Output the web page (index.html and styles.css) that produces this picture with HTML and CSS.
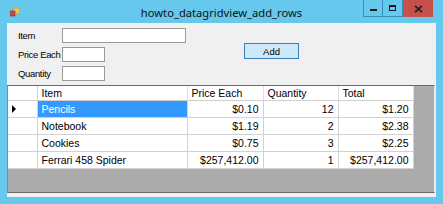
FILE: index.html
```html
<!DOCTYPE html>
<html lang="en">
<head>
  <meta charset="UTF-8">
  <title>howto_datagridview_add_rows</title>
  <link rel="stylesheet" href="styles.css">
</head>
<body>
  <div class="window">
    <div class="titlebar">
      <svg class="app-icon" width="10" height="9" viewBox="0 0 10 9">
        <rect x="3" y="0" width="7" height="6" fill="#f3c44a" stroke="#b88a1c" stroke-width="0.6"/>
        <rect x="0" y="3" width="5" height="5" fill="#d9443a" stroke="#8a2a2a" stroke-width="0.6"/>
        <rect x="1" y="4" width="3" height="1.2" fill="#3d6fd0"/>
      </svg>
      <div class="title">howto_datagridview_add_rows</div>
      <div class="caption-btns">
        <div class="cap-btn min"><span class="min-glyph"></span></div>
        <div class="cap-btn max"><span class="max-glyph"></span></div>
        <div class="cap-btn close">
          <svg width="9" height="8" viewBox="0 0 9 8"><path d="M1 0.8 L8 7.2 M8 0.8 L1 7.2" stroke="#222" stroke-width="1.8"/></svg>
        </div>
      </div>
    </div>
    <div class="client">
      <div class="form-area">
        <div class="fields">
          <label>Item</label><div class="textbox wide"></div>
          <label>Price Each</label><div class="textbox"></div>
          <label>Quantity</label><div class="textbox"></div>
        </div>
        <button class="add-btn">Add</button>
      </div>
      <div class="grid">
        <table>
          <thead>
            <tr>
              <th class="rh"></th>
              <th class="c-item">Item</th>
              <th class="c-price">Price Each</th>
              <th class="c-qty">Quantity</th>
              <th class="c-total">Total</th>
            </tr>
          </thead>
          <tbody>
            <tr>
              <td class="rh"><span class="arrow"></span></td>
              <td class="sel">Pencils</td>
              <td class="num">$0.10</td>
              <td class="num">12</td>
              <td class="num">$1.20</td>
            </tr>
            <tr>
              <td class="rh"></td>
              <td>Notebook</td>
              <td class="num">$1.19</td>
              <td class="num">2</td>
              <td class="num">$2.38</td>
            </tr>
            <tr>
              <td class="rh"></td>
              <td>Cookies</td>
              <td class="num">$0.75</td>
              <td class="num">3</td>
              <td class="num">$2.25</td>
            </tr>
            <tr>
              <td class="rh"></td>
              <td>Ferrari 458 Spider</td>
              <td class="num">$257,412.00</td>
              <td class="num">1</td>
              <td class="num">$257,412.00</td>
            </tr>
          </tbody>
        </table>
      </div>
    </div>
  </div>
</body>
</html>
```

FILE: styles.css
```css
* { box-sizing: border-box; }
body {
  margin: 0;
  font-family: 'Liberation Sans', Arial, sans-serif;
  font-size: 11px;
  color: #000;
}
.window {
  width: 443px;
  height: 204px;
  background: #66c8ec;
  display: flex;
  flex-direction: column;
  padding: 0 7px 7px 7px;
}
.titlebar {
  height: 23px;
  display: flex;
  align-items: flex-start;
  position: relative;
}
.app-icon {
  margin: 8px 0 0 3px;
}
.title {
  position: absolute;
  left: 0;
  right: 0;
  top: 5px;
  text-align: center;
  font-family: 'Noto Sans', 'Open Sans', sans-serif;
  font-size: 11.2px;
  color: #111;
}
.caption-btns {
  margin-left: auto;
  margin-right: 3px;
  display: flex;
  position: relative;
}
.cap-btn {
  height: 17px;
  display: flex;
  align-items: center;
  justify-content: center;
  border: 1px solid #3a8fb8;
  border-top: none;
}
.cap-btn.min { width: 20px; }
.cap-btn.max { width: 20px; border-left: none; }
.cap-btn.close {
  width: 30px;
  background: #c7514a;
  border: none;
}
.min-glyph {
  width: 7px;
  height: 2px;
  background: #1a1a1a;
  margin-top: 4px;
}
.max-glyph {
  width: 7px;
  height: 6px;
  border: 1px solid #1a1a1a;
  border-top-width: 2px;
}
.client {
  flex: 1;
  background: #f0f0f0;
  display: flex;
  flex-direction: column;
  padding-bottom: 4px;
}
.form-area {
  height: 62px;
  display: flex;
  align-items: flex-start;
}
.fields {
  display: grid;
  grid-template-columns: 44px auto;
  row-gap: 4px;
  padding: 5px 0 0 11px;
  align-items: center;
}
.fields label {
  font-size: 9.5px;
  letter-spacing: -0.35px;
  white-space: nowrap;
}
.textbox {
  width: 43px;
  height: 15px;
  background: #fff;
  border: 1px solid #9a9a9a;
}
.textbox.wide { width: 124px; }
.add-btn {
  margin: 20px 0 0 58px;
  width: 55px;
  height: 16px;
  padding: 0;
  background: #cce8fb;
  border: 1px solid #3c7fb1;
  font-family: inherit;
  font-size: 9.5px;
  color: #000;
}
.grid {
  flex: 1;
  background: #ababab;
  border-top: 1px solid #6a6a6a;
  border-left: 1px solid #8a8a8a;
  border-bottom: 1px solid #6a6a6a;
  margin-right: 1px;
  border-right: 1px solid #e6e6e6;
}
table {
  border-collapse: collapse;
  table-layout: fixed;
  width: 405px;
  font-size: 10.5px;
}
th, td {
  padding: 0 4px;
  white-space: nowrap;
  overflow: hidden;
}
th {
  height: 14px;
  background: #fff;
  font-weight: normal;
  text-align: left;
  border-right: 1px solid #e0e0e0;
  border-bottom: 1px solid #d0d0d0;
}
td {
  height: 17px;
  background: #fff;
  border: 1px solid #d2d2d2;
}
th.rh, td.rh {
  width: 29px;
  background: #fff;
  border-right: 1px solid #d2d2d2;
  position: relative;
}
td.rh { border-left: none; }
th.c-item { width: 150px; }
th.c-price { width: 76px; }
th.c-qty { width: 75px; }
th.c-total { width: 75px; }
td.num { text-align: right; }
td.sel {
  background: #3399ff;
  color: #fff;
}
.arrow {
  position: absolute;
  left: 4px;
  top: 4px;
  width: 0;
  height: 0;
  border-top: 4px solid transparent;
  border-bottom: 4px solid transparent;
  border-left: 4px solid #000;
}
```
